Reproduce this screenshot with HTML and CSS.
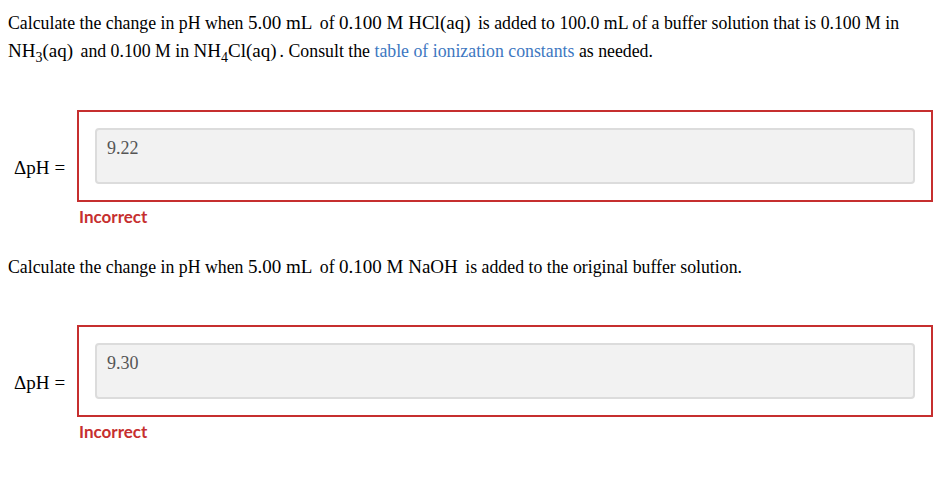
FILE: index.html
```html
<!DOCTYPE html>
<html>
<head>
<meta charset="utf-8">
<link rel="stylesheet" href="styles.css">
</head>
<body>
<div class="page">
  <p class="q q1">Calculate the change in pH when <span class="m">5.00 mL</span> of <span class="m">0.100 M HCl(aq)</span> is added to 100.0 mL of a buffer solution that is 0.100 M in <span class="m">NH<sub>3</sub>(aq)</span> and 0.100 M in <span class="m">NH<sub>4</sub>Cl(aq)</span>. Consult the <a class="link">table of ionization constants</a> as needed.</p>

  <div class="answer a1">
    <div class="label">ΔpH<span class="eq">=</span></div>
    <div class="box">
      <div class="input">9.22</div>
    </div>
  </div>
  <div class="feedback">Incorrect</div>

  <p class="q q2">Calculate the change in pH when <span class="m">5.00 mL</span> of <span class="m">0.100 M NaOH</span> is added to the original buffer solution.</p>

  <div class="answer a2">
    <div class="label">ΔpH<span class="eq">=</span></div>
    <div class="box">
      <div class="input">9.30</div>
    </div>
  </div>
  <div class="feedback">Incorrect</div>
</div>
</body>
</html>
```
FILE: styles.css
```css
html, body {
  margin: 0;
  padding: 0;
  background: #fff;
}
.page {
  padding: 0 7px 0 8px;
  font-family: "Liberation Serif", "Times New Roman", serif;
  font-size: 17.8px;
  color: #000;
}
.q {
  margin: 0;
  line-height: 27px;
}
.q1 {
  padding-top: 9px;
}
.m {
  font-size: 19px;
  margin: 0 3px 0 0;
}
.m sub {
  font-size: 14px;
  vertical-align: -5px;
  line-height: 0;
}
.link {
  color: #3d77c1;
}
.answer {
  display: flex;
  margin-left: -8px;
}
.a1 {
  margin-top: 45px;
}
.label {
  width: 77px;
  box-sizing: border-box;
  padding-left: 14px;
  padding-top: 47px;
  font-size: 19px;
}
.eq {
  margin-left: 5px;
}
.box {
  flex: 1;
  border: 2px solid #c62f2f;
  padding: 16px;
}
.input {
  height: 56px;
  box-sizing: border-box;
  border: 2px solid #dcdcdc;
  border-radius: 4px;
  background: #f2f2f2;
  color: #555;
  padding: 8px 10px;
  font-size: 18px;
  line-height: 20px;
}
.feedback {
  margin-left: 71px;
  margin-top: 5px;
  font-family: Lato, "Open Sans", sans-serif;
  font-weight: bold;
  font-size: 17px;
  line-height: 20px;
  color: #c62f2f;
}
.q2 {
  margin-top: 26px;
}
.a2 {
  margin-top: 44px;
}
```
